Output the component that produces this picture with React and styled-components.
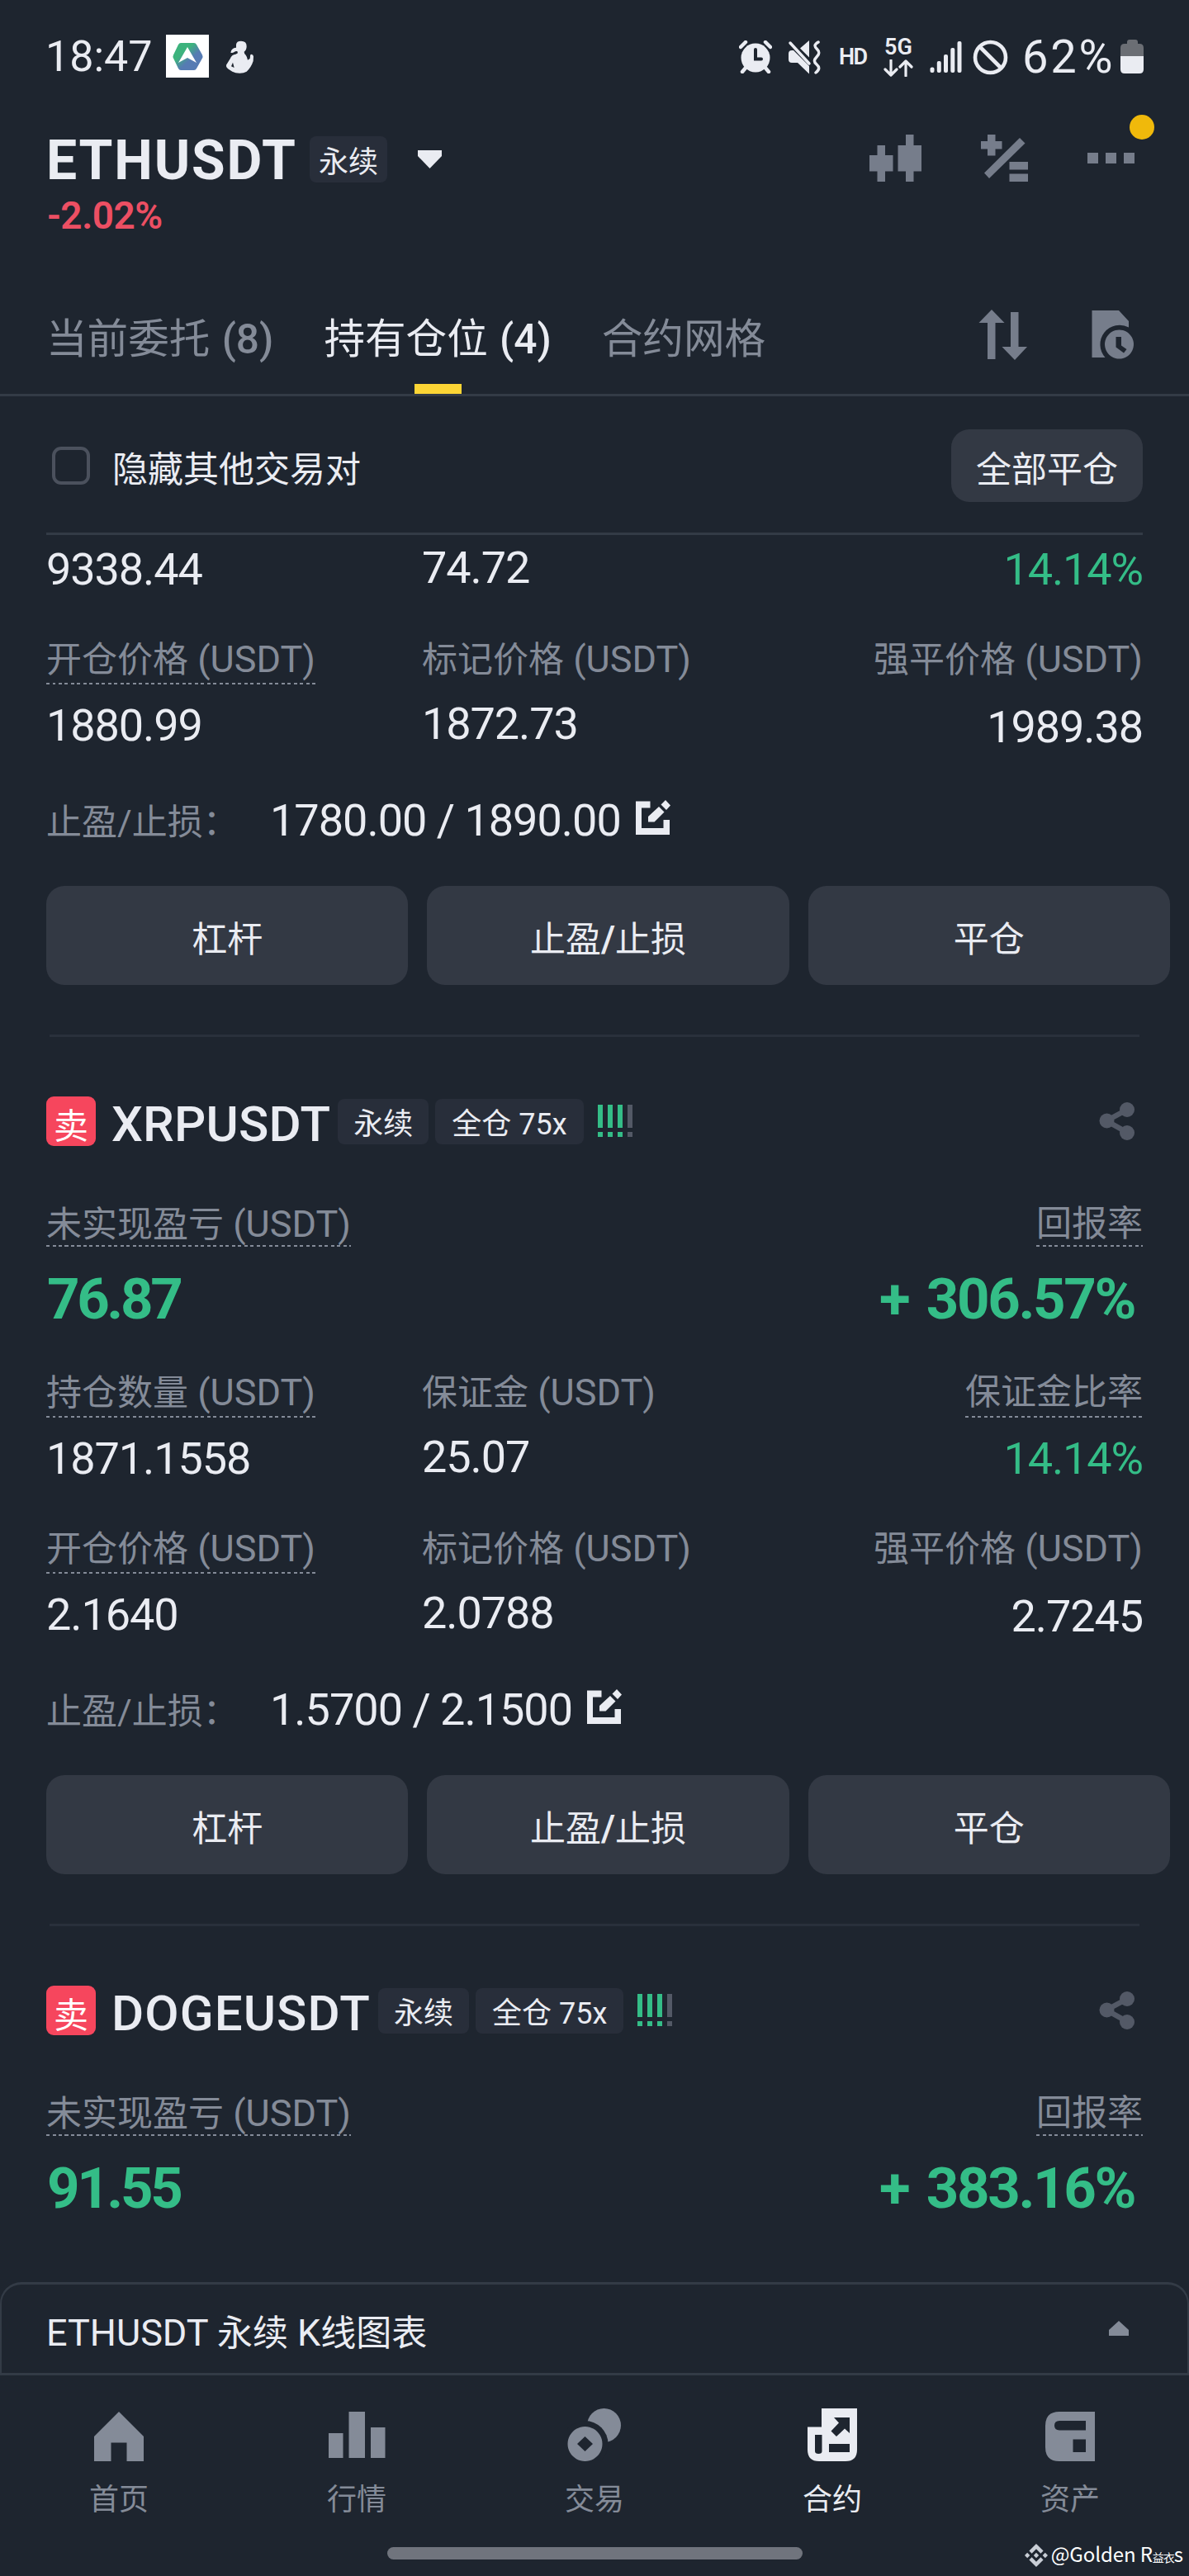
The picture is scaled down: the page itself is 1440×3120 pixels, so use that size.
import React from "react";
import styled, { createGlobalStyle, css } from "styled-components";
import { SiBinance } from "react-icons/si";

const c = {
  bg: "#1e252f",
  text: "#eaecf2",
  muted: "#848b98",
  icon: "#767d8b",
  dim: "#535966",
  line: "#333b46",
  lineSoft: "#29303b",
  chip: "#282e3a",
  button: "#333944",
  green: "#34bd87",
  red: "#f6465d",
};

const Global = createGlobalStyle`
  * { box-sizing: border-box; }
  body { margin: 0; background: ${c.bg}; }
`;

const Screen = styled.div`
  position: relative;
  display: flex;
  flex-direction: column;
  width: 1440px;
  height: 3120px;
  overflow: hidden;
  background: ${c.bg};
  color: ${c.text};
  font-family: Roboto, "Noto Sans CJK SC", sans-serif;
  font-size: 43px;
  white-space: nowrap;
`;

const Icon = styled.svg.attrs((p) => ({ width: p.$w, height: p.$h }))`
  display: block;
  flex: none;
  fill: ${(p) => p.$color || c.text};
`;

/* ---------- status bar ---------- */
const StatusBar = styled.div`
  display: flex;
  align-items: center;
  height: 138px;
  padding: 0 55px 0 55px;
`;
const Clock = styled.div`
  width: 146px;
  font-size: 52px;
  line-height: 60px;
`;
const AppIcon = styled.div`
  width: 52px;
  height: 52px;
  margin: 0 20px 2px 0;
  background: #fff;
`;
const StatusRight = styled.div`
  display: flex;
  align-items: center;
  margin-left: auto;
`;
const AlarmSlot = styled.div`
  margin-right: 18px;
`;
const Hd = styled.div`
  width: 34px;
  margin: 0 20px 0 21px;
  font-size: 27px;
  font-weight: 600;
  letter-spacing: -1.5px;
`;
const Network = styled.div`
  display: flex;
  flex-direction: column;
  align-items: center;
  gap: 4px;
  width: 36px;
  margin-right: 20px;
  font-size: 27px;
  line-height: 22px;
  font-weight: 600;
`;
const BanSlot = styled.div`
  margin-left: 12px;
`;
const BatteryText = styled.div`
  width: 119px;
  margin-left: 17px;
  font-size: 56px;
  line-height: 60px;
  letter-spacing: 2.8px;
`;

/* ---------- header ---------- */
const Header = styled.header`
  height: 202px;
  padding: 25px 56px 0;
`;
const HeaderRow = styled.div`
  display: flex;
  align-items: center;
  height: 60px;
`;
const Pair = styled.div`
  width: 319px;
  padding-top: 2px;
  font-size: 66px;
  font-weight: 700;
  letter-spacing: 1.8px;
`;
const Chip = styled.div`
  height: ${(p) => p.$h || 55}px;
  padding: 0 ${(p) => p.$px || 20}px;
  border-radius: 8px;
  background: ${c.chip};
  font-size: 36px;
  line-height: ${(p) => (p.$h || 55) + 8}px;
`;
const CaretSlot = styled.div`
  margin-left: 37px;
`;
const HeaderIcons = styled.div`
  display: flex;
  align-items: center;
  gap: 72px;
  margin: 0 10px 3px auto;
`;
const MoreButton = styled.div`
  position: relative;
`;
const Notice = styled.span`
  position: absolute;
  left: 51px;
  top: -46px;
  width: 30px;
  height: 30px;
  border-radius: 50%;
  background: #f0b90b;
`;
const Change = styled.div`
  margin-top: 18px;
  padding-left: 1px;
  font-size: 46px;
  line-height: 40px;
  font-weight: 600;
  letter-spacing: -0.5px;
  color: #ec4f63;
`;

/* ---------- tabs ---------- */
const Tabs = styled.nav`
  display: flex;
  height: 140px;
  padding: 0 66px 0 56px;
  border-bottom: 3px solid ${c.line};
`;
const Tab = styled.div`
  display: flex;
  flex-direction: column;
  align-items: center;
  justify-content: space-between;
  height: 137px;
  margin-right: ${(p) => p.$gap || 0}px;
  font-size: 49.6px;
  line-height: 143px;
  word-spacing: 2px;
  color: ${(p) => (p.$active ? c.text : c.muted)};
`;
const TabText = styled.div`
  height: 125px;
`;
const Underline = styled.div`
  width: 57px;
  height: 12px;
  background: #fcd535;
`;
const Count = styled.span`
  font-weight: 500;
`;
const TabIcons = styled.div`
  display: flex;
  align-items: center;
  gap: 78px;
  margin-left: auto;
  padding-bottom: 6px;
`;

/* ---------- filter ---------- */
const FilterBar = styled.div`
  display: flex;
  align-items: center;
  height: 168px;
  margin: 0 56px;
  padding-top: 2px;
  border-bottom: 3px solid ${c.line};
`;
const Checkbox = styled.div`
  width: 46px;
  height: 46px;
  margin: 0 27px 0 7px;
  border: 4px solid #4b515d;
  border-radius: 11px;
`;
const FilterText = styled.div`
  padding-top: 2px;
`;
const CloseAll = styled.button`
  margin-left: auto;
  width: 232px;
  height: 88px;
  padding: 3px 0 0;
  border: 0;
  border-radius: 22px;
  background: ${c.button};
  color: ${c.text};
  font: inherit;
`;

/* ---------- positions ---------- */
const List = styled.main`
  display: flex;
  flex-direction: column;
  height: 2116px;
`;
const Card = styled.section`
  padding: ${(p) => (p.$partial ? 0 : 72)}px 0 0;
`;
const CardHead = styled.div`
  display: flex;
  align-items: center;
  height: 60px;
  padding: 0 66px 0 56px;
`;
const Side = styled.div`
  width: 60px;
  height: 60px;
  padding-left: 9px;
  margin-right: 19px;
  border-radius: 9px;
  background: ${c.red};
  color: #fff;
  font-size: 42px;
  line-height: 74px;
`;
const Name = styled.div`
  margin-right: 9px;
  padding-top: 8px;
  font-size: 60px;
  line-height: 60px;
  font-weight: 500;
  letter-spacing: ${(p) => p.$tracking || 0.2}px;
`;
const HeadChips = styled.div`
  display: flex;
  gap: 8px;
  margin-right: 17px;
`;
const ShareSlot = styled.div`
  margin-left: auto;
`;
const PnlRow = styled.div`
  display: flex;
  justify-content: space-between;
  margin: 72px 56px 0;
  height: 150px;
`;
const Stat = styled.div`
  display: flex;
  flex-direction: column;
  align-items: ${(p) => (p.$end ? "flex-end" : "flex-start")};
`;
const Label = styled.div`
  height: 53px;
  line-height: 45px;
  color: ${c.muted};
  ${(p) =>
    p.$dotted &&
    css`
      background: repeating-linear-gradient(90deg, ${c.muted} 0 4px, transparent 4px 7.5px) left bottom / 100% 2px no-repeat;
    `}
`;
const Latin = styled.span`
  font-size: 45px;
`;
const Pnl = styled.div`
  margin-top: 28px;
  padding: 0 ${(p) => (p.$end ? 10 : 0)}px 0 1px;
  font-size: 69px;
  line-height: 72px;
  font-weight: 700;
  letter-spacing: ${(p) => (p.$end ? -2.4 : -3.4)}px;
  word-spacing: 7px;
  color: ${c.green};
`;
const StatRow = styled.div`
  display: grid;
  grid-template-columns: 455px 1fr auto;
  height: ${(p) => (p.$partial ? 128 : 189)}px;
  margin: 0 56px;
  padding-top: ${(p) => (p.$partial ? 12 : 0)}px;
`;
const Value = styled.div`
  margin-top: ${(p) => (p.$bare ? 0 : 20) + (p.$shift || 0)}px;
  font-size: 54px;
  line-height: 60px;
  letter-spacing: -1.1px;
  color: ${(p) => (p.$green ? c.green : c.text)};
`;
const FirstStats = styled.div`
  margin-top: 54px;
`;
const TpSl = styled.div`
  display: flex;
  align-items: center;
  height: 60px;
  padding-left: 56px;
  margin-bottom: 48px;
`;
const TpSlLabel = styled.div`
  width: 271px;
  padding-bottom: 6px;
  color: ${c.muted};
`;
const TpSlValue = styled.div`
  margin-right: 18px;
  padding-bottom: 3px;
  font-size: 54px;
  letter-spacing: -1px;
`;
const EditSlot = styled.div`
  margin-bottom: 10px;
`;
const Actions = styled.div`
  display: flex;
  gap: 23px;
  padding: 0 23px 0 56px;
  margin-bottom: 60px;
`;
const Action = styled.button`
  flex: 1;
  height: 120px;
  padding: 2px 0 0;
  border: 0;
  border-radius: 22px;
  background: ${c.button};
  color: ${c.text};
  font: inherit;
`;
const Strong = styled.span`
  font-size: 45px;
  font-weight: 600;
`;
const Divider = styled.div`
  height: 3px;
  margin: 0 60px;
  background: ${c.lineSoft};
`;

/* ---------- bottom ---------- */
const ChartPanel = styled.div`
  display: flex;
  align-items: center;
  justify-content: space-between;
  height: 113px;
  padding: 3px 71px 0 54px;
  border: 3px solid ${c.line};
  border-width: 3px 2px;
  border-radius: 26px 26px 0 0;
`;
const PanelIcon = styled.div`
  margin-bottom: 5px;
`;
const BottomNav = styled.nav`
  display: grid;
  grid-template-columns: repeat(5, 1fr);
  height: 208px;
  padding-top: 40px;
`;
const NavItem = styled.div`
  display: flex;
  flex-direction: column;
  align-items: center;
  gap: 26px;
  font-size: 36px;
  line-height: 42px;
  color: ${(p) => (p.$active ? c.text : c.muted)};
`;
const HomeBar = styled.div`
  width: 503px;
  height: 15px;
  margin: 0 auto;
  border-radius: 8px;
  background: #70747d;
`;
const Watermark = styled.div`
  position: absolute;
  right: 7px;
  bottom: 5px;
  display: flex;
  align-items: center;
  gap: 4px;
  font-family: "Noto Sans CJK SC", sans-serif;
  font-size: 24px;
  line-height: 36px;
  letter-spacing: -0.1px;
  color: #fff;
`;
const TinyGlyphs = styled.span`
  font-size: 14px;
  letter-spacing: -1px;
`;

/* ---------- drawings ---------- */
const AlarmIcon = () => (
  <Icon $w={40} $h={40} viewBox="893 49 40 40">
    <circle cx="913" cy="70" r="17.5" />
    <path d="M895 57l6-6M925 51l6 6M902 81l-5 6M924 81l5 6" stroke={c.text} strokeWidth="4.5" strokeLinecap="round" />
    <path d="M913 60v11.5h7" fill="none" stroke={c.bg} strokeWidth="4" strokeLinecap="round" />
  </Icon>
);
const MuteIcon = () => (
  <Icon $w={42} $h={42} viewBox="953 48 42 42">
    <path d="M955 65q0-4 4-4h2l19 19v9.500L966 76h-7q-4 0-4-4zM969 58.500l11-9.500v20.500z" />
    <path d="M957 52l23 25" stroke={c.text} strokeWidth="3.500" strokeLinecap="round" />
    <path
      d="M991 51c-5 3-5 5-1.500 8.500s3 6-.5 9.500s-3.500 6 0 9s4 6-1 10"
      fill="none"
      stroke={c.text}
      strokeWidth="3.500"
      strokeLinecap="round"
    />
  </Icon>
);
const DataArrows = () => (
  <Icon $w={36} $h={21} viewBox="0 0 36 21">
    <path d="M9 1v17M2 12l7 7 7-7M27 20V3M20 9l7-7 7 7" fill="none" stroke={c.text} strokeWidth="3.2" strokeLinecap="round" strokeLinejoin="round" />
  </Icon>
);
const SignalIcon = () => (
  <Icon $w={40} $h={40} viewBox="1126 51 40 40">
    <rect x="1126.500" y="83.500" width="5" height="6.500" rx="2" />
    <rect x="1134.800" y="76" width="5" height="14" rx="2" />
    <rect x="1143" y="68" width="5" height="22" rx="2" />
    <rect x="1151.300" y="60" width="5" height="30" rx="2" />
    <rect x="1159.500" y="52" width="5" height="38" rx="2" />
  </Icon>
);
const BanIcon = () => (
  <Icon $w={43} $h={43} viewBox="0 0 43 43">
    <circle cx="21.500" cy="21.500" r="18.500" fill="none" stroke={c.text} strokeWidth="4.600" />
    <path d="M8.500 8.500l26 26" stroke={c.text} strokeWidth="4.600" />
  </Icon>
);
const BatteryIcon = () => (
  <Icon $w={28} $h={42} viewBox="0 0 28 42">
    <path d="M8 5V3q0-3 3-3h7q3 0 3 3v2h2q5 0 5 5v11H0V10q0-5 5-5z" fill="#6b6e74" />
    <path d="M0 20h28v16q0 5-5 5H5q-5 0-5-5z" />
  </Icon>
);
const AppLogo = () => (
  <Icon $w={52} $h={52} viewBox="0 0 52 52">
    <defs>
      <linearGradient id="hex" x1="0" y1="0" x2="1" y2="1">
        <stop offset="0.35" stopColor="#3db37d" />
        <stop offset="0.6" stopColor="#567bb3" />
      </linearGradient>
    </defs>
    <path d="M18 10h16q2 0 3 2l7 12.500q1 2 0 4L37 41q-1 2-3 2H18q-2 0-3-2L9 28.500q-1-2 0-4L15 12q1-2 3-2z" fill="url(#hex)" />
    <path d="M26 15l11 19-11-6-11 6z" fill="#fff" />
  </Icon>
);
const PersonIcon = () => (
  <Icon $w={35} $h={40} viewBox="277 55 105 120">
    <path d="M316 70q1-13 18-13 20 0 20 19 0 14-9 20 0 8 6 12 5 6 7 18l8-5 1-8q-1-7 4-8 7 0 8 8l-1 17q-8 24-24 38-10 6-25 6-16 0-27-6l-16-10q-8-7-6-14l14-22q6-16 20-17l8-4-2-7q-7-1-12 4-6 4-12 1 1-9 8-14 6-4 12-4z" />
    <path d="M304 135l5 19-11-5z" fill={c.bg} />
  </Icon>
);
const CaretDown = () => (
  <Icon $w={29} $h={22} viewBox="0 0 29 22">
    <path d="M0 0h29v7L14.500 22 0 7z" />
  </Icon>
);
const CandleIcon = () => (
  <Icon $w={63} $h={57} viewBox="1052 163 63 57" $color={c.icon}>
    <path d="M1052 188h9.500v-12h9.500v12h9.500v19.500H1071V220h-9.500v-12.500H1052zM1086.500 176h9.500v-13h9.500v13h9.500v31.500h-9.500V220h-9.500v-12.500h-9.500z" />
  </Icon>
);
const CalcIcon = () => (
  <Icon $w={57} $h={57} viewBox="1186 163 57 57" $color={c.icon}>
    <path d="M1194 163h9.500v8h8v9.500h-8v8h-9.500v-8h-8V171h8zM1233 167l6.500 6.500L1196 216l-6-6.500zM1220.500 196h22.500v9.500h-22.500zM1220.500 210.500h22.500v9.500h-22.500z" />
  </Icon>
);
const DotsIcon = () => (
  <Icon $w={57} $h={13} viewBox="0 0 57 13" $color={c.icon}>
    <path d="M0 0h13v13H0zM22 0h13v13H22zM44 0h13v13H44z" />
  </Icon>
);
const SortIcon = () => (
  <Icon $w={59} $h={62} viewBox="1185 375 59 62" $color={c.icon}>
    <path d="M1201 375l15.500 16H1205.500v44h-9.500v-44h-10.500zM1224 378h9.500v42H1244l-15 16-15.500-16H1224z" />
  </Icon>
);
const HistoryIcon = () => (
  <Icon $w={52} $h={60} viewBox="1322 377 52 60" $color={c.icon}>
    <path d="M1322.500 377H1355l12 13v7.500a23.500 23.500 0 0 0-28.500 36.500h-16z" />
    <path fillRule="evenodd" d="M1355.500 400.500a17.500 17.500 0 1 0 .01 0zM1351.500 409h6.500v10.500l6.500 4.500-3.500 4.500-9.500-7z" />
  </Icon>
);
const EditIcon = () => (
  <Icon $w={42} $h={42} viewBox="769 969.5 42 42">
    <path d="M769 971h17.500v8H776v24.500h26.500v-10h7.500v18H769zM797 977.500l6.500 6.500-12 12H784v-6.500zM805 969.500l6 6.500-5 5.500-6.500-6.500z" />
  </Icon>
);
const ShareIcon = () => (
  <Icon $w={43} $h={48} viewBox="1331 1334.500 43 48" $color={c.dim}>
    <path d="M1365 1344.500l-25 13.500 25 14" fill="none" stroke={c.dim} strokeWidth="6.500" />
    <circle cx="1340.500" cy="1358" r="9" />
    <circle cx="1365" cy="1344.500" r="9" />
    <circle cx="1365" cy="1372.500" r="9" />
  </Icon>
);
const RiskIcon = () => (
  <Icon $w={43} $h={40} viewBox="0 0 43 40">
    {[0, 12, 24, 36].map((x, i) => (
      <path key={x} d={`M${x} 0h6v28h-6zM${x} 33h6v6h-6z`} fill={i < 3 ? c.green : c.dim} />
    ))}
  </Icon>
);
const CaretUp = () => (
  <Icon $w={24} $h={18} viewBox="0 0 24 18" $color={c.muted}>
    <path d="M12 0l12 11v7H0v-7z" />
  </Icon>
);
const HomeIcon = () => (
  <Icon $w={64} $h={64} viewBox="112 2917 64 64" $color={c.muted}>
    <path d="M144 2921l30 30v30h-20.500v-22.500h-19V2981H114v-30z" />
  </Icon>
);
const MarketIcon = () => (
  <Icon $w={70} $h={64} viewBox="397 2917 70 64" $color={c.muted}>
    <path d="M398 2947h17.500v30H398zM422.500 2921H442v56h-19.500zM449 2940h17.500v37H449z" />
  </Icon>
);
const TradeIcon = () => (
  <Icon $w={66} $h={64} viewBox="687 2919 66 64" $color={c.muted}>
    <circle cx="731.500" cy="2939.500" r="20.500" />
    <circle cx="708.500" cy="2962" r="28" fill={c.bg} />
    <path fillRule="evenodd" d="M708.500 2941a21 21 0 1 0 .01 0zM708.500 2953l9.500 9-9.500 9-9.500-9z" />
  </Icon>
);
const FuturesIcon = () => (
  <Icon $w={64} $h={64} viewBox="976 2917 64 64">
    <path
      fillRule="evenodd"
      d="M995 2917h43v50q0 14-14 14h-32q-14 0-14-14v-27.500h17zM987 2949h8.500v20q0 3-4.200 3t-4.300-3zM1004 2960h25v10h-25zM1010 2928h19v19l-6-5.500-10 9.500-6.500-6.500 9.500-10z"
    />
  </Icon>
);
const WalletIcon = () => (
  <Icon $w={64} $h={64} viewBox="1264 2917 64 64" $color={c.muted}>
    <path fillRule="evenodd" d="M1283 2921h43v60h-43q-17 0-17-17v-26q0-17 17-17zM1283 2932h32v11.500h-32q-6 0-6-5.700t6-5.800zM1299.500 2954.500h15.500v15.500h-15.500z" />
  </Icon>
);

/* ---------- composition ---------- */
const Usdt = () => <Latin> (USDT)</Latin>;

const PriceRow = ({ open, mark, liq }) => (
  <StatRow>
    <Stat>
      <Label $dotted>开仓价格<Usdt /></Label>
      <Value>{open}</Value>
    </Stat>
    <Stat>
      <Label>标记价格<Usdt /></Label>
      <Value $shift={-2}>{mark}</Value>
    </Stat>
    <Stat $end>
      <Label>强平价格<Usdt /></Label>
      <Value $shift={2}>{liq}</Value>
    </Stat>
  </StatRow>
);

const CardFooter = ({ tpsl }) => (
  <>
    <TpSl>
      <TpSlLabel>止盈/止损：</TpSlLabel>
      <TpSlValue>{tpsl}</TpSlValue>
      <EditSlot><EditIcon /></EditSlot>
    </TpSl>
    <Actions>
      <Action>杠杆</Action>
      <Action>止盈<Strong>/</Strong>止损</Action>
      <Action>平仓</Action>
    </Actions>
    <Divider />
  </>
);

const PositionHead = ({ name, tracking, pnl, roi }) => (
  <>
    <CardHead>
      <Side>卖</Side>
      <Name $tracking={tracking}>{name}</Name>
      <HeadChips>
        <Chip $px={19}>永续</Chip>
        <Chip>全仓 75x</Chip>
      </HeadChips>
      <RiskIcon />
      <ShareSlot><ShareIcon /></ShareSlot>
    </CardHead>
    <PnlRow>
      <Stat>
        <Label $dotted>未实现盈亏<Usdt /></Label>
        <Pnl>{pnl}</Pnl>
      </Stat>
      <Stat $end>
        <Label $dotted>回报率</Label>
        <Pnl $end>{roi}</Pnl>
      </Stat>
    </PnlRow>
  </>
);

const NAV = [
  ["首页", HomeIcon],
  ["行情", MarketIcon],
  ["交易", TradeIcon],
  ["合约", FuturesIcon],
  ["资产", WalletIcon],
];

export default function App() {
  return (
    <Screen>
      <Global />
      <StatusBar>
        <Clock>18:47</Clock>
        <AppIcon><AppLogo /></AppIcon>
        <PersonIcon />
        <StatusRight>
          <AlarmSlot><AlarmIcon /></AlarmSlot>
          <MuteIcon />
          <Hd>HD</Hd>
          <Network>
            5G
            <DataArrows />
          </Network>
          <SignalIcon />
          <BanSlot><BanIcon /></BanSlot>
          <BatteryText>62%</BatteryText>
          <BatteryIcon />
        </StatusRight>
      </StatusBar>

      <Header>
        <HeaderRow>
          <Pair>ETHUSDT</Pair>
          <Chip $h={56} $px={11}>永续</Chip>
          <CaretSlot><CaretDown /></CaretSlot>
          <HeaderIcons>
            <CandleIcon />
            <CalcIcon />
            <MoreButton>
              <DotsIcon />
              <Notice />
            </MoreButton>
          </HeaderIcons>
        </HeaderRow>
        <Change>-2.02%</Change>
      </Header>

      <Tabs>
        <Tab $gap={61}>
          <TabText>当前委托 <Count>(8)</Count></TabText>
        </Tab>
        <Tab $active $gap={61}>
          <TabText>持有仓位 <Count>(4)</Count></TabText>
          <Underline />
        </Tab>
        <Tab>
          <TabText>合约网格</TabText>
        </Tab>
        <TabIcons>
          <SortIcon />
          <HistoryIcon />
        </TabIcons>
      </Tabs>

      <FilterBar>
        <Checkbox />
        <FilterText>隐藏其他交易对</FilterText>
        <CloseAll>全部平仓</CloseAll>
      </FilterBar>

      <List>
        <Card $partial>
          <StatRow $partial>
            <Value $bare>9338.44</Value>
            <Value $bare $shift={-2}>74.72</Value>
            <Value $bare $green>14.14%</Value>
          </StatRow>
          <PriceRow open="1880.99" mark="1872.73" liq="1989.38" />
          <CardFooter tpsl="1780.00 / 1890.00" />
        </Card>
        <Card>
          <PositionHead name="XRPUSDT" pnl="76.87" roi="+ 306.57%" />
          <FirstStats>
            <StatRow>
              <Stat>
                <Label $dotted>持仓数量<Usdt /></Label>
                <Value>1871.1558</Value>
              </Stat>
              <Stat>
                <Label>保证金<Usdt /></Label>
                <Value $shift={-2}>25.07</Value>
              </Stat>
              <Stat $end>
                <Label $dotted>保证金比率</Label>
                <Value $green>14.14%</Value>
              </Stat>
            </StatRow>
          </FirstStats>
          <PriceRow open="2.1640" mark="2.0788" liq="2.7245" />
          <CardFooter tpsl="1.5700 / 2.1500" />
        </Card>
        <Card>
          <PositionHead name="DOGEUSDT" tracking={1.1} pnl="91.55" roi="+ 383.16%" />
        </Card>
      </List>

      <ChartPanel>
        <div><Latin>ETHUSDT </Latin>永续<Latin> K</Latin>线图表</div>
        <PanelIcon><CaretUp /></PanelIcon>
      </ChartPanel>

      <BottomNav>
        {NAV.map(([label, Glyph]) => (
          <NavItem key={label} $active={label === "合约"}>
            <Glyph />
            {label}
          </NavItem>
        ))}
      </BottomNav>
      <HomeBar />
      <Watermark>
        <SiBinance size={28} color="#c9ced6" />
        <div>@Golden R<TinyGlyphs>益衣</TinyGlyphs>s</div>
      </Watermark>
    </Screen>
  );
}
